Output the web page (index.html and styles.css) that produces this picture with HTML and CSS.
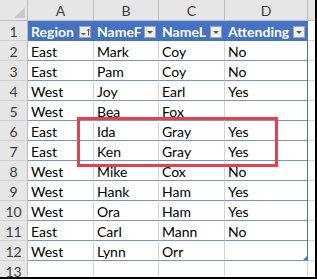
FILE: index.html
```html
<!DOCTYPE html>
<html>
<head>
<meta charset="utf-8">
<link rel="stylesheet" href="styles.css">
</head>
<body>
<div class="frame">
  <div class="sheet">
    <div class="corner"><svg class="sel-all" width="11" height="11" viewBox="0 0 11 11"><polygon points="11,0 11,11 0,11" fill="#C9C9C9"/></svg></div>
    <div class="ch">A</div>
    <div class="ch">B</div>
    <div class="ch">C</div>
    <div class="ch">D</div>
    <div class="ch e"></div>

    <div class="rh">1</div>
    <div class="th">Region<span class="btn"><svg width="12" height="12" viewBox="0 0 12 12"><polygon points="2,7 7,7 4.5,9.5" fill="#5A5A5A"/><path d="M9.5 9.5 V3 M7.8 4.8 L9.5 3 L11.2 4.8" stroke="#5A5A5A" stroke-width="1" fill="none"/></svg></span></div>
    <div class="th">NameF<span class="btn"><svg width="12" height="12" viewBox="0 0 12 12"><polygon points="3,5 9,5 6,8" fill="#5A5A5A"/></svg></span></div>
    <div class="th">NameL<span class="btn"><svg width="12" height="12" viewBox="0 0 12 12"><polygon points="3,5 9,5 6,8" fill="#5A5A5A"/></svg></span></div>
    <div class="th last">Attending<span class="btn"><svg width="12" height="12" viewBox="0 0 12 12"><polygon points="3,5 9,5 6,8" fill="#5A5A5A"/></svg></span></div>
    <div class="e"></div>

    <div class="rh">2</div><div class="td">East</div><div class="td">Mark</div><div class="td">Coy</div><div class="td last">No</div><div class="e"></div>
    <div class="rh">3</div><div class="td">East</div><div class="td">Pam</div><div class="td">Coy</div><div class="td last">No</div><div class="e"></div>
    <div class="rh">4</div><div class="td">West</div><div class="td">Joy</div><div class="td">Earl</div><div class="td last">Yes</div><div class="e"></div>
    <div class="rh">5</div><div class="td">West</div><div class="td">Bea</div><div class="td">Fox</div><div class="td last"></div><div class="e"></div>
    <div class="rh">6</div><div class="td">East</div><div class="td">Ida</div><div class="td">Gray</div><div class="td last">Yes</div><div class="e"></div>
    <div class="rh">7</div><div class="td">East</div><div class="td">Ken</div><div class="td">Gray</div><div class="td last">Yes</div><div class="e"></div>
    <div class="rh">8</div><div class="td">West</div><div class="td">Mike</div><div class="td">Cox</div><div class="td last">No</div><div class="e"></div>
    <div class="rh">9</div><div class="td">West</div><div class="td">Hank</div><div class="td">Ham</div><div class="td last">Yes</div><div class="e"></div>
    <div class="rh">10</div><div class="td">West</div><div class="td">Ora</div><div class="td">Ham</div><div class="td last">Yes</div><div class="e"></div>
    <div class="rh">11</div><div class="td">East</div><div class="td">Carl</div><div class="td">Mann</div><div class="td last">No</div><div class="e"></div>
    <div class="rh">12</div><div class="td">West</div><div class="td">Lynn</div><div class="td">Orr</div><div class="td last"><svg class="resize" width="4" height="4" viewBox="0 0 4 4"><polygon points="4,0 4,4 0,4" fill="#4472C4"/></svg></div><div class="e"></div>
    <div class="rh">13</div><div class="c"></div><div class="c"></div><div class="c"></div><div class="c"></div><div class="e"></div>
  </div>
  <div class="highlight"></div>
</div>
</body>
</html>
```
FILE: styles.css
```css
body {
  margin: 0;
}

.frame {
  position: relative;
  width: 317px;
  height: 279px;
  background: #000;
}

.sheet {
  display: grid;
  grid-template-columns: 28px 66px 65px 66px 83px 7px;
  grid-template-rows: 21px repeat(13, 20px);
  width: 315px;
  height: 277px;
  overflow: hidden;
  background: #fff;
  font-family: Lato, "Liberation Sans", sans-serif;
  font-size: 14px;
  color: #000;
}

.sheet > div {
  box-sizing: border-box;
  position: relative;
  border-right: 1px solid #D4D4D4;
  border-bottom: 1px solid #D4D4D4;
  line-height: 17px;
  padding: 2px 0 0 3px;
  white-space: nowrap;
  overflow: hidden;
}

.sheet > .corner {
  background: #E6E6E6;
  border-right-color: #BDBDBD;
  border-bottom-color: #BDBDBD;
  padding: 0;
}

.sel-all {
  position: absolute;
  right: 2px;
  bottom: 2px;
}

.sheet > .ch {
  background: #E6E6E6;
  border-right-color: #BDBDBD;
  border-bottom-color: #BDBDBD;
  text-align: center;
  color: #3C3C3C;
  padding: 2px 0 0;
  line-height: 18px;
}

.sheet > .rh {
  background: #E6E6E6;
  border-right-color: #BDBDBD;
  border-bottom-color: #D0D0D0;
  text-align: center;
  color: #3C3C3C;
  padding-left: 0;
}

.sheet > .th {
  background: #4472C4;
  color: #fff;
  font-weight: 700;
  border-right-color: #4472C4;
  border-bottom-color: #4472C4;
}

.sheet > .td {
  border-bottom-color: #7592D2;
}

.sheet > .last {
  border-right-color: #4A70C2;
}

.sheet > .e {
  border-right: none;
}

.sheet > .ch.e {
  background: #E6E6E6;
}

.btn {
  position: absolute;
  right: 2px;
  bottom: 2px;
  width: 12px;
  height: 12px;
  box-sizing: border-box;
  background: #F0F0F0;
  border: 1px solid #A8A8A8;
  display: flex;
}

.btn svg {
  position: absolute;
  left: -1px;
  top: -1px;
}

.resize {
  position: absolute;
  right: 0;
  bottom: 0;
}

.highlight {
  position: absolute;
  left: 77px;
  top: 117px;
  width: 201px;
  height: 50px;
  box-sizing: border-box;
  border: 3px solid #E5414D;
}
```
